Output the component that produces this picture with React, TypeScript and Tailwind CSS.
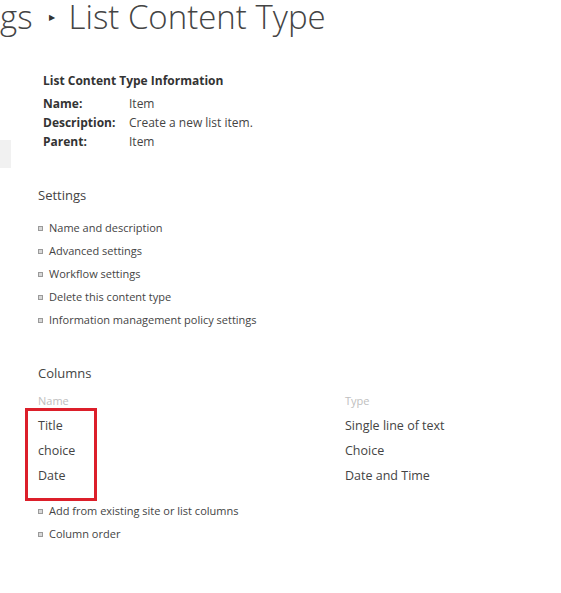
import React from 'react';

const font = { fontFamily: '"Open Sans", "Noto Sans", sans-serif' };

const settingsLinks = [
  'Name and description',
  'Advanced settings',
  'Workflow settings',
  'Delete this content type',
  'Information management policy settings',
];

const columns = [
  { name: 'Title', type: 'Single line of text' },
  { name: 'choice', type: 'Choice' },
  { name: 'Date', type: 'Date and Time' },
];

function Bullet() {
  return <span className="inline-block w-[5px] h-[5px] border border-[#9a9a9a] bg-[#d8d8d8] mr-[6px] shrink-0" />;
}

function LinkItem({ label }: { label: string }) {
  return (
    <li className="flex items-center h-[23px]">
      <Bullet />
      <span className="text-[11px] text-[#444]">{label}</span>
    </li>
  );
}

export default function App() {
  return (
    <div className="w-[561px] h-[593px] bg-white overflow-hidden text-[#444]" style={font}>
      {/* Page title */}
      <h1 className="flex items-center h-[38px] -mt-[2px] text-[33px] font-light leading-[38px] text-[#444] whitespace-nowrap">
        <span>gs</span>
        <span className="ml-[16px] mr-[14px] text-[8px] text-[#333]">&#9654;</span>
        <span>List Content Type</span>
      </h1>

      <div className="flex -mt-[2px]">
        {/* clipped left navigation */}
        <div className="w-[11px] shrink-0 pt-[106px]">
          <div className="h-[28px] bg-[#f1f1f1]" />
        </div>

        <div className="ml-[27px] flex-1">
          {/* Info */}
          <div className="ml-[5px] mt-[34px] text-[12px]">
            <div className="font-bold text-[#333] h-[26px] flex items-center">List Content Type Information</div>
            <div className="grid grid-cols-[86px_1fr] auto-rows-[19px] items-center">
              <span className="font-bold text-[#333]">Name:</span>
              <span>Item</span>
              <span className="font-bold text-[#333]">Description:</span>
              <span>Create a new list item.</span>
              <span className="font-bold text-[#333]">Parent:</span>
              <span>Item</span>
            </div>
          </div>

          {/* Settings */}
          <h2 className="mt-[34px] text-[13px] text-[#444] h-[22px] flex items-center">Settings</h2>
          <ul className="mt-[10px]">
            {settingsLinks.map((l) => (
              <LinkItem key={l} label={l} />
            ))}
          </ul>

          {/* Columns */}
          <h2 className="mt-[31px] text-[13px] text-[#444] h-[22px] flex items-center">Columns</h2>
          <div className="mt-[6px] grid grid-cols-[307px_1fr]">
            <div className="h-[21px] flex items-center text-[11px] text-[#c0c0c0]">Name</div>
            <div className="h-[21px] flex items-center text-[11px] text-[#c0c0c0]">Type</div>
          </div>
          <div className="relative mt-[2px]">
            <div className="absolute -left-[13px] -top-[6px] w-[72px] h-[93px] border-[3px] border-[#dc1f2a]" />
            {columns.map((c) => (
              <div key={c.name} className="grid grid-cols-[307px_1fr] h-[25px] items-center text-[12.5px] text-[#444]">
                <span>{c.name}</span>
                <span>{c.type}</span>
              </div>
            ))}
          </div>
          <ul className="mt-[11px]">
            <LinkItem label="Add from existing site or list columns" />
            <LinkItem label="Column order" />
          </ul>
        </div>
      </div>
    </div>
  );
}
